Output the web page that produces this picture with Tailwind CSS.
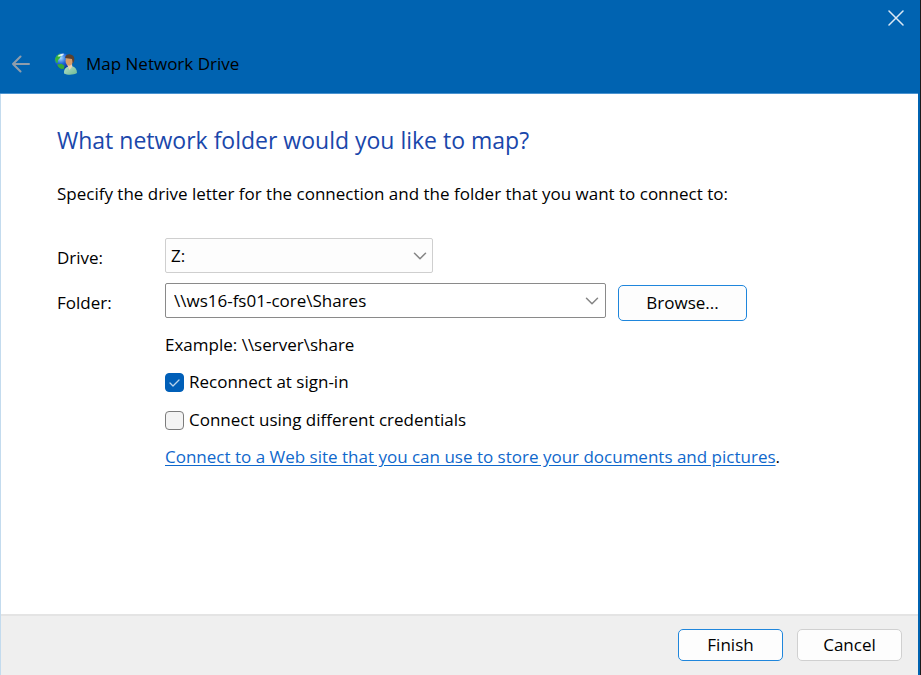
<!DOCTYPE html>
<html lang="en">
<head>
<meta charset="utf-8">
<meta name="viewport" content="width=device-width, initial-scale=1">
<title>Map Network Drive</title>
<script src="https://cdn.jsdelivr.net/npm/@tailwindcss/browser@4"></script>
</head>
<body class="bg-[#1b1b1b] pr-px font-['Open_Sans','Noto_Sans',sans-serif] text-[17px] leading-6 text-black">
<div class="flex min-h-screen flex-col border-r-2 border-[#0063b1] bg-white">
  <header class="flex h-[94px] flex-col border-b border-[#4a93d0] bg-[#0063b1]">
    <div class="flex justify-end pt-2 pr-3">
      <button type="button" aria-label="Close" class="flex size-5 items-center justify-center">
        <svg viewBox="0 0 16 16" class="size-4" fill="none" stroke="#dbe8f4" stroke-width="1.5" stroke-linecap="round"><path d="M1 1l14 14M15 1L1 15"/></svg>
      </button>
    </div>
    <div class="flex items-center pt-6 pl-3">
      <button type="button" aria-label="Back" class="flex h-6 w-[18px] items-center justify-center">
        <svg viewBox="0 0 18 18" class="size-[18px]" fill="none" stroke="#8f9dab" stroke-width="2" stroke-linecap="round" stroke-linejoin="round"><path d="M17 9H1M8.500 1.500L1 9l7.500 7.500"/></svg>
      </button>
      <svg viewBox="0 0 24 24" class="ml-6 size-6" aria-hidden="true">
        <defs>
          <radialGradient id="globe" cx=".38" cy=".3" r=".75"><stop offset="0" stop-color="#a8dcff"/><stop offset=".5" stop-color="#1f66dc"/><stop offset="1" stop-color="#0a2c9a"/></radialGradient>
          <linearGradient id="shirt" x1="0" y1="0" x2="1" y2="1"><stop offset="0" stop-color="#b4dfc8"/><stop offset="1" stop-color="#6dbb94"/></linearGradient>
        </defs>
        <circle cx="8.500" cy="9" r="7.800" fill="url(#globe)"/>
        <path d="M.9 7.500C1.500 4.500 3.500 2.500 6 1.500l1 2-1 2.500-2 2-.5 3.500-1.500-1z" fill="#35b53a"/>
        <path d="M3 12.500l4.500-.8 3 2-.5 3-2.500.3C5.500 16.500 4 15 3 12.500z" fill="#35a83a"/>
        <path d="M3.500 4.200C5 2.200 7 1.400 10 1.700 9.500 3.700 6 5 3.500 4.200z" fill="#eafaf6" opacity=".9"/>
        <path d="M10 21.500c-.3-4 1.500-6.200 5-6.900l3-.3c3.200.8 5 3 5 6.700-3 2-9.500 2.400-13 .5z" fill="url(#shirt)"/>
        <path d="M13.500 13.500l2 4.500 2.800-3.500-.3-2.500h-4z" fill="#ecd3b4"/>
        <ellipse cx="15.200" cy="8.800" rx="3.700" ry="4.900" fill="#d69d6c"/>
        <path d="M11 5.700C11.500 3 14 2 16.500 2.400c3 .5 4.300 3 3.700 6L18.900 12l-.9-5C16 6.500 13 6.300 11 5.700z" fill="#5a4130"/>
      </svg>
      <h1 class="ml-2">Map Network Drive</h1>
    </div>
  </header>

  <form class="flex grow flex-col border-l border-[#c3dbee]">
    <main class="grow px-14 pt-8">
      <h2 class="text-[23px] leading-7 text-[#1a47ab]">What network folder would you like to map?</h2>
      <p class="mt-7">Specify the drive letter for the connection and the folder that you want to connect to:</p>

      <div class="mt-8 grid grid-cols-[108px_1fr] gap-y-[10px]">
        <label for="drive" class="pt-2">Drive:</label>
        <div class="relative w-[268px]">
          <select id="drive" class="block h-[35px] w-full appearance-none rounded-xs border border-[#cfcfcf] bg-[#fdfdfd] px-[5px] outline-none">
            <option>Z:</option>
          </select>
          <svg viewBox="0 0 14 8" class="pointer-events-none absolute top-[14px] right-[6px] h-2 w-[14px]" fill="none" stroke="#858585" stroke-width="1.500" stroke-linecap="round" stroke-linejoin="round"><path d="M1.500 1.200l5.500 5.500 5.500-5.500"/></svg>
        </div>

        <label for="folder" class="pt-2">Folder:</label>
        <div class="flex">
          <div class="flex h-[35px] w-[441px] items-center rounded-xs border border-[#8a8a8a] bg-white pr-[6px]">
            <input id="folder" type="text" value="\\ws16-fs01-core\Shares" class="h-full min-w-0 grow pl-2 outline-none">
            <button type="button" aria-label="Show recent folders" class="flex size-[14px] items-center">
              <svg viewBox="0 0 14 8" class="h-2 w-[14px]" fill="none" stroke="#858585" stroke-width="1.500" stroke-linecap="round" stroke-linejoin="round"><path d="M1.500 1.200l5.500 5.500 5.500-5.500"/></svg>
            </button>
          </div>
          <button type="button" class="mt-0.5 ml-3 h-9 w-[129px] rounded-[5px] border border-[#1f86dc] bg-[#fdfdfd]">Browse...</button>
        </div>
      </div>

      <div class="pt-3 pl-[108px]">
        <p>Example: \\server\share</p>
        <label class="mt-[13px] flex items-center gap-[5px]">
          <span class="relative flex size-[19px]">
            <input type="checkbox" checked class="peer size-full appearance-none rounded-sm border border-[#7c7c7c] bg-[#f4f4f4] checked:border-[#005fb8] checked:bg-[#005fb8]">
            <svg viewBox="0 0 19 19" class="pointer-events-none absolute inset-0 hidden peer-checked:block" fill="none" stroke="#b9d4ec" stroke-width="1.300" stroke-linecap="round" stroke-linejoin="round"><path d="M5 10l3 3 6-6"/></svg>
          </span>
          Reconnect at sign-in
        </label>
        <label class="mt-[14px] flex items-center gap-[5px]">
          <span class="relative flex size-[19px]">
            <input type="checkbox" class="peer size-full appearance-none rounded-sm border border-[#7c7c7c] bg-[#f4f4f4] checked:border-[#005fb8] checked:bg-[#005fb8]">
            <svg viewBox="0 0 19 19" class="pointer-events-none absolute inset-0 hidden peer-checked:block" fill="none" stroke="#b9d4ec" stroke-width="1.300" stroke-linecap="round" stroke-linejoin="round"><path d="M5 10l3 3 6-6"/></svg>
          </span>
          Connect using different credentials
        </label>
        <p class="mt-[13px]"><a href="#" class="text-[#0f68cc] underline underline-offset-2">Connect to a Web site that you can use to store your documents and pictures</a>.</p>
      </div>
    </main>

    <footer class="flex justify-end gap-[14px] border-t-2 border-[#e4e4e4] bg-[#efefef] pt-[13px] pr-4 pb-[14px]">
      <button type="submit" class="h-8 w-[105px] rounded-[5px] border border-[#1f86dc] bg-[#fdfdfd]">Finish</button>
      <button type="button" class="h-8 w-[105px] rounded-[5px] border border-[#d0d0d0] bg-[#fdfdfd]">Cancel</button>
    </footer>
  </form>
</div>
</body>
</html>
